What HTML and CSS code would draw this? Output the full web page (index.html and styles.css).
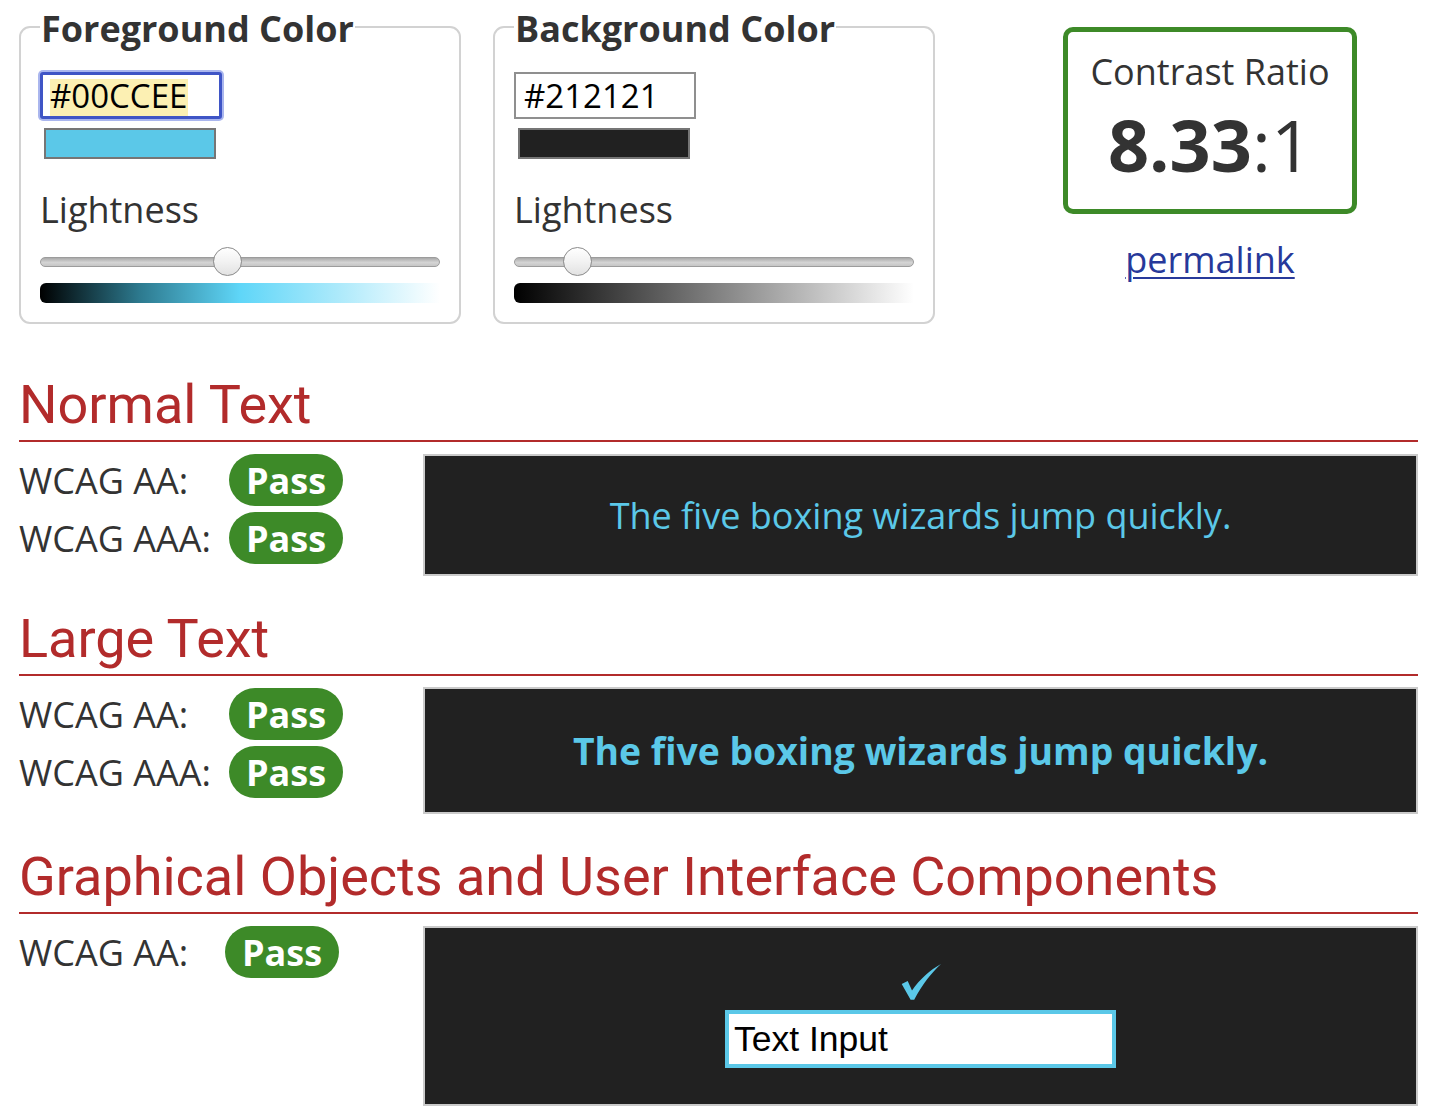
FILE: index.html
```html
<!DOCTYPE html>
<html lang="en">
<head>
<meta charset="utf-8">
<title>Contrast Checker</title>
<link rel="stylesheet" href="styles.css">
</head>
<body>
<div class="page">
  <div class="top">
    <fieldset class="picker">
      <legend>Foreground Color</legend>
      <input class="hex hex--focus" type="text" value="#00CCEE" aria-label="Foreground color">
      <div class="swatch swatch--fg"></div>
      <label class="lbl">Lightness</label>
      <input class="slider" type="range" min="0" max="100" step="0.1" value="46.7" aria-label="Foreground lightness">
      <div class="grad grad--fg"></div>
    </fieldset>
    <fieldset class="picker">
      <legend>Background Color</legend>
      <input class="hex" type="text" value="#212121" aria-label="Background color">
      <div class="swatch swatch--bg"></div>
      <label class="lbl">Lightness</label>
      <input class="slider" type="range" min="0" max="100" step="0.1" value="12.9" aria-label="Background lightness">
      <div class="grad grad--bg"></div>
    </fieldset>
    <div class="result">
      <div class="ratio-box">
        <div class="ratio-title">Contrast Ratio</div>
        <div class="ratio-val"><b>8.33</b>:1</div>
      </div>
      <a class="permalink" href="#">permalink</a>
    </div>
  </div>

  <section class="sec sec--first">
    <h2 class="sec-title">Normal Text</h2>
    <div class="sec-body">
      <div class="tests">
        <span class="tlabel">WCAG AA:</span><span class="badge">Pass</span>
        <span class="tlabel">WCAG AAA:</span><span class="badge">Pass</span>
      </div>
      <div class="sample sample--normal">The five boxing wizards jump quickly.</div>
    </div>
  </section>

  <section class="sec">
    <h2 class="sec-title">Large Text</h2>
    <div class="sec-body">
      <div class="tests tests--large">
        <span class="tlabel">WCAG AA:</span><span class="badge">Pass</span>
        <span class="tlabel">WCAG AAA:</span><span class="badge">Pass</span>
      </div>
      <div class="sample sample--large">The five boxing wizards jump quickly.</div>
    </div>
  </section>

  <section class="sec">
    <h2 class="sec-title">Graphical Objects and User Interface Components</h2>
    <div class="sec-body">
      <div class="tests tests--single">
        <span class="tlabel">WCAG AA:</span><span class="badge">Pass</span>
      </div>
      <div class="sample sample--ui">
        <svg class="check" width="40" height="36" viewBox="0 0 40 36" aria-hidden="true">
          <path d="M0.7 20 L6.7 17 L11 26.5 C19 15 29 6 40 0 C31 8 21 21 13.2 35.8 L9.6 35.8 Z" fill="#5bc8e8"/>
        </svg>
        <input class="demo-input" type="text" value="Text Input" aria-label="Text Input">
      </div>
    </div>
  </section>
</div>
</body>
</html>
```

FILE: styles.css
```css
* { box-sizing: border-box; }

body {
  margin: 0;
  font-family: "Open Sans", "Noto Sans", sans-serif;
  color: #333;
  background: #fff;
}

.page {
  width: 1430px;
  padding: 5px 12px 0 19px;
}

/* ---------- top row ---------- */
.top {
  display: flex;
  align-items: flex-start;
}

.picker {
  width: 442px;
  margin: 0 32px 0 0;
  min-width: 0;
  border: 2px solid #d2d2d2;
  border-radius: 11px;
  padding: 23px 19px 19px;
  display: flex;
  flex-direction: column;
  align-items: flex-start;
}

.picker legend {
  font-weight: 700;
  font-size: 36px;
  line-height: 40px;
  padding: 4px 1px 0;
  color: #333;
}

.hex {
  width: 182px;
  height: 47px;
  border: 2px solid #8f8f8f;
  padding: 0 8px;
  margin: 0;
  font-family: "Open Sans", "Noto Sans", sans-serif;
  font-size: 33px;
  color: #000;
  background: #fff;
  outline: none;
}

.hex--focus {
  width: 182px;
  border: 3px solid #3f55c6;
  padding-left: 7px;
  box-shadow: 0 0 0 2px #aab6ee;
  border-radius: 3px;
  background: #fff linear-gradient(#fcf0b3, #fcf0b3) no-repeat 7px 4px / 138px 37px;
}

.swatch {
  width: 172px;
  height: 31px;
  margin: 9px 0 0 4px;
  border: 2px solid #767676;
}
.swatch--fg { background: #5bc8e8; }
.swatch--bg { background: #212121; }

.lbl {
  margin-top: 27px;
  font-size: 36px;
  line-height: 48px;
  color: #333;
}

.slider {
  -webkit-appearance: none;
  appearance: none;
  width: 400px;
  height: 29px;
  margin: 13px 0 0;
  padding: 0;
  background: transparent;
}
.slider::-webkit-slider-runnable-track {
  height: 10px;
  border-radius: 5px;
  border: 1px solid #9c9c9c;
  background: linear-gradient(#a9a9a9, #d4d4d4 55%, #c6c6c6);
}
.slider::-webkit-slider-thumb {
  -webkit-appearance: none;
  appearance: none;
  width: 29px;
  height: 29px;
  margin-top: -11px;
  border-radius: 50%;
  border: 1.5px solid #8b8b8b;
  background: linear-gradient(#ffffff, #f2f2f2 50%, #e2e2e2);
}

.grad {
  width: 400px;
  height: 20px;
  margin-top: 7px;
  border-radius: 6px 0 0 6px;
}
.grad--fg { background: linear-gradient(to right, #000 0%, #2d7a8f 25%, #5fd6f8 50%, #aeeafb 75%, #fff 100%); }
.grad--bg { background: linear-gradient(to right, #000, #fff); }

.result {
  margin: 22px 0 0 96px;
  width: 294px;
  display: flex;
  flex-direction: column;
  align-items: center;
}

.ratio-box {
  width: 294px;
  height: 187px;
  border: 5px solid #3d8a28;
  border-radius: 10px;
  padding-top: 18px;
  text-align: center;
}
.ratio-title {
  font-size: 36px;
  line-height: 44px;
}
.ratio-val {
  margin-top: 10px;
  font-size: 72px;
  line-height: 80px;
  font-weight: 400;
}
.ratio-val b { font-weight: 700; }

.permalink {
  margin-top: 24px;
  font-size: 36px;
  line-height: 44px;
  color: #27399a;
  text-decoration: underline;
  text-decoration-thickness: 2px;
  text-underline-offset: 4px;
}

/* ---------- sections ---------- */
.sec { margin-top: 32px; }
.sec--first { margin-top: 50px; }

.sec-title {
  margin: 0;
  font-family: Roboto, "Liberation Sans", sans-serif;
  font-weight: 400;
  font-size: 54px;
  line-height: 62px;
  color: #b22b2b;
  padding-bottom: 4px;
  border-bottom: 2px solid #b22b2b;
}

.sec-body {
  display: flex;
  align-items: flex-start;
  margin-top: 12px;
}

.tests {
  width: 404px;
  flex: none;
  display: grid;
  grid-template-columns: 210px 114px;
  row-gap: 6px;
  align-items: center;
}
.tests--single { grid-template-columns: 206px 114px; }

.tlabel {
  font-size: 36px;
  color: #333;
  white-space: nowrap;
}

.badge {
  width: 114px;
  height: 52px;
  border-radius: 26px;
  background: #3d8a28;
  color: #fff;
  font-weight: 700;
  font-size: 36px;
  display: flex;
  align-items: center;
  justify-content: center;
}

.sample {
  flex: 1;
  background: #212121;
  border: 2px solid #cacaca;
  color: #5bc8e8;
  display: flex;
  align-items: center;
  justify-content: center;
}
.sample--normal { height: 122px; font-size: 36px; }
.sample--large { height: 127px; font-size: 37.3px; font-weight: 700; margin-top: -1px; }
.sample--ui {
  height: 180px;
  flex-direction: column;
  gap: 10px;
}

.check { display: block; }

.demo-input {
  width: 391px;
  height: 58px;
  margin: 0;
  border: 4px solid #5bc8e8;
  padding: 0 5px;
  background: #fff;
  color: #000;
  font-family: "Liberation Sans", Arial, sans-serif;
  font-size: 35.5px;
  outline: none;
}
```
